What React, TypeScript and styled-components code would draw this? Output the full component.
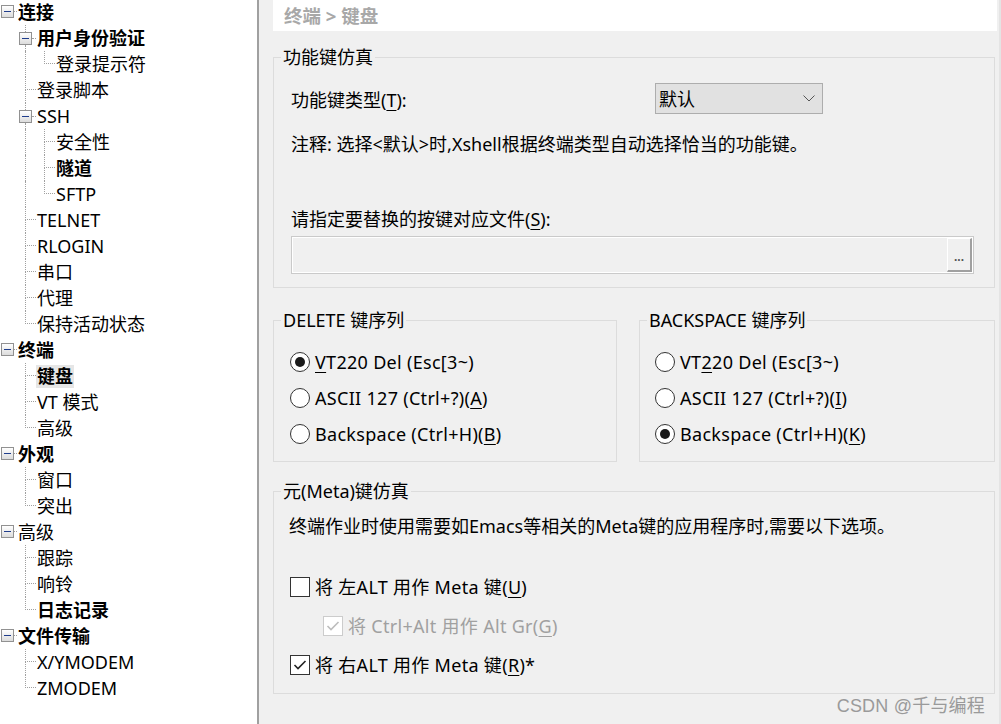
import React from "react";
import styled, { createGlobalStyle, css } from "styled-components";

const Global = createGlobalStyle`
  html, body { margin: 0; padding: 0; height: 100%; overflow: hidden; }
  body { font-family: "Noto Sans", "Noto Sans CJK SC", sans-serif; color: #000; background: #f0f0f0; }
  #root { height: 100%; }
  * { box-sizing: border-box; }
`;

const FONT = `"Noto Sans", "Noto Sans CJK SC", sans-serif`;

/* ---------- layout ---------- */
const Page = styled.div`
  display: flex;
  width: 1001px;
  height: 724px;
  position: relative;
  font-family: ${FONT};
  font-size: 18px;
`;

const TreePanel = styled.div`
  width: 259px;
  flex: none;
  background: #fff;
  border-right: 2px solid #a0a0a0;
  overflow: hidden;
`;

const TreeList = styled.div`
  display: flex;
  flex-direction: column;
  margin-top: -1px;
`;

const Main = styled.div`
  flex: 1;
  display: flex;
  flex-direction: column;
  align-items: stretch;
  padding: 0 2px 0 14px;
  background: #f0f0f0;
  border-right: 2px solid #e4e4e4;
`;

/* ---------- tree ---------- */
const Row = styled.div`
  display: flex;
  align-items: center;
  height: 26px;
`;

const Cell = styled.div<{ $first?: boolean }>`
  width: ${(p) => (p.$first ? 17 : 19)}px;
  height: 26px;
  flex: none;
  display: flex;
  flex-direction: column;
`;

const dotted = "1px dotted #a0a0a0";

const Seg = styled.div<{ $h: number; $line?: boolean; $hor?: boolean }>`
  height: ${(p) => p.$h}px;
  margin-left: 8px;
  width: 11px;
  flex: none;
  border-left: ${(p) => (p.$line ? dotted : "1px solid transparent")};
  ${(p) =>
    p.$hor &&
    css`
      border-bottom: ${dotted};
    `}
`;

const BoxRow = styled.div<{ $first?: boolean }>`
  display: flex;
  align-items: center;
  height: 13px;
  flex: none;
  padding-left: ${(p) => (p.$first ? 1 : 2)}px;
`;

const Expander = styled.div`
  width: 13px;
  height: 13px;
  border: 1px solid #919191;
  background: linear-gradient(#ffffff, #dcdcdc);
  display: flex;
  align-items: center;
  justify-content: center;
  flex: none;
`;

const Minus = styled.div`
  width: 7px;
  height: 1px;
  background: #1f3d8c;
`;

const Stub = styled.div`
  width: 4px;
  border-bottom: ${dotted};
  height: 1px;
`;

const Label = styled.span<{ $bold?: boolean; $selected?: boolean }>`
  padding: 0 1px;
  line-height: 23px;
  white-space: nowrap;
  font-weight: ${(p) => (p.$bold ? 700 : 400)};
  background: ${(p) => (p.$selected ? "#e6e6e6" : "transparent")};
`;

type TNode = { label: string; bold?: boolean; selected?: boolean; children?: TNode[] };

const tree: TNode[] = [
  {
    label: "连接",
    bold: true,
    children: [
      { label: "用户身份验证", bold: true, children: [{ label: "登录提示符" }] },
      { label: "登录脚本" },
      { label: "SSH", children: [{ label: "安全性" }, { label: "隧道", bold: true }, { label: "SFTP" }] },
      { label: "TELNET" },
      { label: "RLOGIN" },
      { label: "串口" },
      { label: "代理" },
      { label: "保持活动状态" },
    ],
  },
  {
    label: "终端",
    bold: true,
    children: [{ label: "键盘", bold: true, selected: true }, { label: "VT 模式" }, { label: "高级" }],
  },
  { label: "外观", bold: true, children: [{ label: "窗口" }, { label: "突出" }] },
  { label: "高级", children: [{ label: "跟踪" }, { label: "响铃" }, { label: "日志记录", bold: true }] },
  { label: "文件传输", bold: true, children: [{ label: "X/YMODEM" }, { label: "ZMODEM" }] },
];

function renderTree(nodes: TNode[], depth: number, guides: boolean[]): React.ReactNode[] {
  const out: React.ReactNode[] = [];
  nodes.forEach((n, i) => {
    const last = i === nodes.length - 1;
    const hasKids = !!n.children && n.children.length > 0;
    const cells: React.ReactNode[] = [];
    if (depth === 0) {
      cells.push(
        <Cell key="c0" $first>
          {hasKids ? (
            <>
              <Seg $h={6} />
              <BoxRow $first>
                <Expander>
                  <Minus />
                </Expander>
                <Stub />
              </BoxRow>
            </>
          ) : null}
        </Cell>
      );
    } else {
      cells.push(<Cell key="c0" $first />);
      for (let d = 1; d < depth; d++) {
        cells.push(
          <Cell key={"g" + d}>
            <Seg $h={26} $line={guides[d]} />
          </Cell>
        );
      }
      if (hasKids) {
        cells.push(
          <Cell key="own">
            <Seg $h={7} $line />
            <BoxRow>
              <Expander>
                <Minus />
              </Expander>
              <Stub />
            </BoxRow>
            <Seg $h={6} $line={!last} />
          </Cell>
        );
      } else {
        cells.push(
          <Cell key="own">
            <Seg $h={13} $line $hor />
            <Seg $h={13} $line={!last} />
          </Cell>
        );
      }
    }
    out.push(
      <Row key={depth + "-" + n.label + i}>
        {cells}
        <Label $bold={n.bold} $selected={n.selected}>
          {n.label}
        </Label>
      </Row>
    );
    if (hasKids) {
      const g = [...guides];
      g[depth] = !last;
      out.push(...renderTree(n.children!, depth + 1, g));
    }
  });
  return out;
}

/* ---------- right side ---------- */
const Header = styled.div`
  height: 31px;
  flex: none;
  background: #fff;
  padding-left: 11px;
  display: flex;
  align-items: center;
  font-weight: 700;
  color: #a8a8a8;
  font-size: 18.5px;
  line-height: 24px;
`;

const GroupBox = styled.fieldset<{ $mt: number; $w?: number; $grow?: boolean }>`
  margin: ${(p) => p.$mt}px ${(p) => (p.$grow || p.$w ? 0 : 2)}px 0 0;
  padding: 0;
  border: 1px solid #dcdcdc;
  min-width: 0;
  flex: ${(p) => (p.$grow ? "1 1 0" : "none")};
  ${(p) =>
    p.$w &&
    css`
      width: ${p.$w}px;
    `}
`;

const Legend = styled.legend`
  margin-left: 7px;
  padding: 0 2px;
  font-size: 18px;
  line-height: 24px;
`;

const Body = styled.div<{ $pad: string }>`
  padding: ${(p) => p.$pad};
  display: flex;
  flex-direction: column;
`;

const TypeRow = styled.div`
  display: flex;
  align-items: center;
  height: 31px;
`;

const FieldLabel = styled.span`
  width: 364px;
  line-height: 24px;
  flex: none;
  padding-top: 2px;
`;

const Select = styled.div`
  width: 168px;
  height: 31px;
  background: #e1e1e1;
  border: 1px solid #adadad;
  display: flex;
  align-items: center;
  justify-content: space-between;
  padding: 0 7px 0 3px;
  line-height: 24px;
`;

const Text = styled.div<{ $mt?: number }>`
  line-height: 24px;
  margin-top: ${(p) => p.$mt ?? 0}px;
  white-space: nowrap;
`;

const FileInput = styled.div`
  margin-top: 5px;
  height: 38px;
  border: 1px solid #cacaca;
  box-shadow: inset 0 0 0 1px #ffffff;
  background: #f0f0f0;
  display: flex;
  justify-content: flex-end;
  padding: 1px;
`;

const BrowseButton = styled.div`
  width: 25px;
  height: 100%;
  border-left: 1px solid #ffffff;
  border-top: 1px solid #ffffff;
  border-right: 2px solid #a0a0a0;
  border-bottom: 2px solid #a0a0a0;
  background: #f0f0f0;
  display: flex;
  align-items: flex-end;
  justify-content: center;
  padding-bottom: 7px;
  font-size: 12px;
  line-height: 12px;
  font-family: "Liberation Sans", sans-serif;
  font-weight: 700;
  color: #555;
`;

const SplitRow = styled.div`
  display: flex;
  flex: none;
  gap: 22px;
  margin-top: 20px;
  margin-right: 2px;
`;

const OptionRow = styled.div<{ $h: number; $indent?: number; $disabled?: boolean }>`
  display: flex;
  align-items: center;
  height: ${(p) => p.$h}px;
  padding-left: ${(p) => p.$indent ?? 0}px;
  line-height: 24px;
  white-space: nowrap;
  letter-spacing: 0.3px;
  color: ${(p) => (p.$disabled ? "#a0a0a0" : "#000")};
`;

const RadioCircle = styled.span<{ $on?: boolean }>`
  width: 20px;
  height: 20px;
  border-radius: 50%;
  border: 1px solid #333;
  background: #fff;
  margin-right: 5px;
  flex: none;
  display: flex;
  align-items: center;
  justify-content: center;
  &::after {
    content: "";
    width: 10px;
    height: 10px;
    border-radius: 50%;
    background: ${(p) => (p.$on ? "#1a1a1a" : "transparent")};
  }
`;

const CheckBox = styled.span<{ $disabled?: boolean }>`
  width: 20px;
  height: 20px;
  border: 1px solid ${(p) => (p.$disabled ? "#cccccc" : "#333")};
  background: #fff;
  margin-right: 5px;
  flex: none;
  display: flex;
  align-items: center;
  justify-content: center;
`;

const U = styled.span`
  text-decoration: underline;
  text-underline-offset: 3px;
  text-decoration-thickness: 1px;
`;

const Watermark = styled.div`
  position: absolute;
  right: 16px;
  bottom: 7px;
  font-family: "Liberation Sans", "Noto Sans CJK SC", sans-serif;
  font-size: 18px;
  line-height: 22px;
  color: #9a9a9a;
  letter-spacing: 0.2px;
`;

const Check = ({ color }: { color: string }) => (
  <svg width="14" height="12" viewBox="0 0 14 12">
    <polyline points="1.5,6 5,9.5 12.5,2" fill="none" stroke={color} strokeWidth="1.6" />
  </svg>
);

const Chevron = () => (
  <svg width="12" height="7" viewBox="0 0 12 7">
    <polyline points="0.5,0.5 6,6 11.5,0.5" fill="none" stroke="#555" strokeWidth="1" />
  </svg>
);

export default function App() {
  return (
    <>
      <Global />
      <Page>
        <TreePanel>
          <TreeList>{renderTree(tree, 0, [])}</TreeList>
        </TreePanel>
        <Main>
          <Header>终端 &gt; 键盘</Header>

          <GroupBox $mt={14}>
            <Legend>功能键仿真</Legend>
            <Body $pad="14px 20px 13px 17px">
              <TypeRow>
                <FieldLabel>
                  功能键类型(<U>T</U>):
                </FieldLabel>
                <Select>
                  <span>默认</span>
                  <Chevron />
                </Select>
              </TypeRow>
              <Text $mt={18}>注释: 选择&lt;默认&gt;时,Xshell根据终端类型自动选择恰当的功能键。</Text>
              <Text $mt={51}>
                请指定要替换的按键对应文件(<U>S</U>):
              </Text>
              <FileInput>
                <BrowseButton>...</BrowseButton>
              </FileInput>
            </Body>
          </GroupBox>

          <SplitRow>
            <GroupBox $mt={0} $w={344}>
              <Legend>DELETE 键序列</Legend>
              <Body $pad="12px 0 9px 16px">
                <OptionRow $h={36}>
                  <RadioCircle $on />
                  <span>
                    <U>V</U>T220 Del (Esc[3~)
                  </span>
                </OptionRow>
                <OptionRow $h={36}>
                  <RadioCircle />
                  <span>
                    ASCII 127 (Ctrl+?)(<U>A</U>)
                  </span>
                </OptionRow>
                <OptionRow $h={36}>
                  <RadioCircle />
                  <span>
                    Backspace (Ctrl+H)(<U>B</U>)
                  </span>
                </OptionRow>
              </Body>
            </GroupBox>
            <GroupBox $mt={0} $grow>
              <Legend>BACKSPACE 键序列</Legend>
              <Body $pad="12px 0 9px 15px">
                <OptionRow $h={36}>
                  <RadioCircle />
                  <span>
                    VT<U>2</U>20 Del (Esc[3~)
                  </span>
                </OptionRow>
                <OptionRow $h={36}>
                  <RadioCircle />
                  <span>
                    ASCII 127 (Ctrl+?)(<U>I</U>)
                  </span>
                </OptionRow>
                <OptionRow $h={36}>
                  <RadioCircle $on />
                  <span>
                    Backspace (Ctrl+H)(<U>K</U>)
                  </span>
                </OptionRow>
              </Body>
            </GroupBox>
          </SplitRow>

          <GroupBox $mt={17}>
            <Legend>元(Meta)键仿真</Legend>
            <Body $pad="11px 0 9px 15px">
              <Text>终端作业时使用需要如Emacs等相关的Meta键的应用程序时,需要以下选项。</Text>
              <Text $mt={30}>
                <OptionRow $h={38} $indent={1}>
                  <CheckBox />
                  <span>
                    将 左ALT 用作 Meta 键(<U>U</U>)
                  </span>
                </OptionRow>
              </Text>
              <OptionRow $h={39} $indent={34} $disabled>
                <CheckBox $disabled>
                  <Check color="#bdbdbd" />
                </CheckBox>
                <span>
                  将 Ctrl+Alt 用作 Alt Gr(<U>G</U>)
                </span>
              </OptionRow>
              <OptionRow $h={39} $indent={1}>
                <CheckBox>
                  <Check color="#222" />
                </CheckBox>
                <span>
                  将 右ALT 用作 Meta 键(<U>R</U>)*
                </span>
              </OptionRow>
            </Body>
          </GroupBox>
        </Main>
        <Watermark>CSDN @千与编程</Watermark>
      </Page>
    </>
  );
}
